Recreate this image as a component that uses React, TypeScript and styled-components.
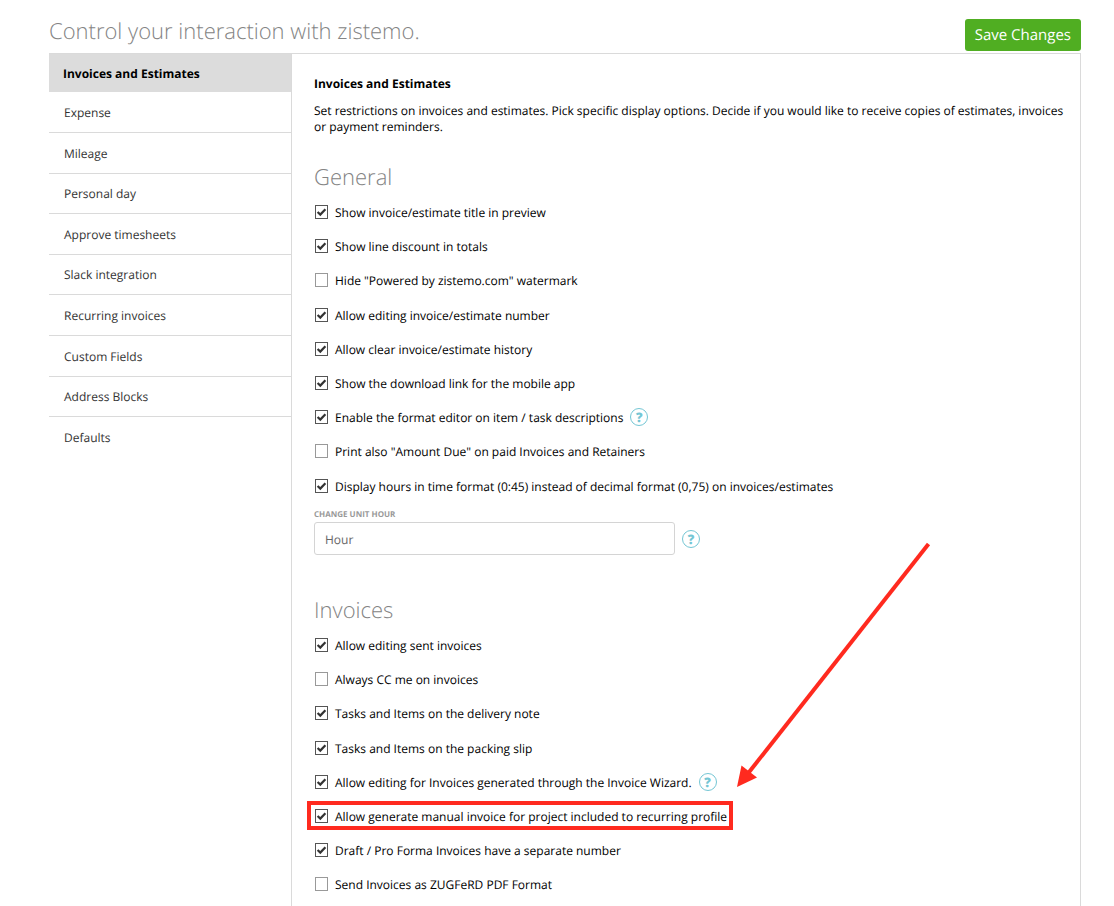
import React, { useState } from "react";
import styled, { createGlobalStyle } from "styled-components";

const GlobalStyle = createGlobalStyle`
  * { box-sizing: border-box; }
  body {
    margin: 0;
    background: #fff;
    color: #000;
    font: 12px/16px "Open Sans", "Noto Sans", sans-serif;
    text-rendering: geometricPrecision;
  }
  button, input { text-rendering: inherit; }
`;

const Page = styled.div`
  display: flex;
  flex-direction: column;
  min-height: 100vh;
  padding: 0 33px 0 49px;
`;

const Header = styled.header`
  display: flex;
  justify-content: space-between;
  align-items: flex-start;
  padding: 19px 0 2px;
`;

const Title = styled.h1`
  margin: 0;
  font-size: 22px;
  line-height: 24px;
  font-weight: 300;
  color: #848484;
`;

const SaveButton = styled.button`
  height: 32px;
  padding: 0 10px;
  border: 0;
  border-radius: 3px;
  background: #50ae22;
  color: #fff;
  font: 400 15px/32px "Open Sans", sans-serif;
  cursor: pointer;
`;

const Panel = styled.div`
  flex: 1;
  display: grid;
  grid-template-columns: 243px minmax(0, 1fr);
  border-top: 1px solid #dadada;
  border-right: 1px solid #dadada;
`;

const Sidebar = styled.nav`
  border-right: 1px solid #dadada;
`;

const MenuList = styled.ul`
  margin: 0;
  padding: 0;
  list-style: none;
`;

const MenuItem = styled.li`
  height: 41px;
  border-bottom: 1px solid #dadada;
  &:nth-child(4), &:nth-child(6), &:nth-child(9) { height: 40px; }
  &:first-child { height: 38px; border-bottom: 0; }
  &:last-child { border-bottom: 0; }
`;

const MenuLink = styled.a<{ $active: boolean }>`
  display: flex;
  align-items: center;
  height: 100%;
  padding: 1px 14px 0 ${(p) => (p.$active ? "14px" : "15px")};
  text-decoration: none;
  color: ${(p) => (p.$active ? "#000" : "#333")};
  background: ${(p) => (p.$active ? "#dcdcdc" : "transparent")};
  font-weight: ${(p) => (p.$active ? 700 : 400)};
`;

const Content = styled.main`
  padding: 22px 14px 0 22px;
`;

const PageHeading = styled.h2`
  margin: 0 0 11px;
  font-size: 12px;
  line-height: 16px;
  font-weight: 700;
`;

const Intro = styled.p`
  margin: 0;
`;

const Section = styled.section`
  padding-top: 30px;
  & + & { padding-top: 43px; }
`;

const SectionHeading = styled.h3`
  margin: 0 0 7px;
  font-size: 22px;
  line-height: 24px;
  font-weight: 300;
  color: #848484;
`;

const OptionList = styled.ul`
  margin: 0;
  padding: 0;
  list-style: none;
`;

const OptionRow = styled.li`
  position: relative;
  display: flex;
  align-items: center;
  gap: 7px;
  height: 34px;
  &:nth-child(5n + 4) { height: 35px; }
  & > button { margin-bottom: 2px; }
`;

const OptionLabel = styled.label`
  display: flex;
  align-items: center;
  gap: 6px;
  padding-left: 1px;
`;

const BoxStack = styled.span`
  display: inline-grid;
  width: 14px;
  height: 14px;
  margin-bottom: 2px;
  & > * { grid-area: 1 / 1; }
`;

const BoxInput = styled.input`
  appearance: none;
  width: 13px;
  height: 14px;
  margin: 0;
  border: 1px solid #999;
  background: #fff;
  &:checked { border-color: #555; }
  & + svg { visibility: hidden; }
  &:checked + svg { visibility: visible; }
`;

const BoxTick = styled.svg`
  width: 13px;
  height: 14px;
  pointer-events: none;
`;

const HelpButton = styled.button`
  width: 18px;
  height: 18px;
  padding: 0;
  border: 1px solid #74c6d4;
  border-radius: 50%;
  background: #fff;
  color: #74c6d4;
  font: 800 13px/16px "Open Sans", sans-serif;
  text-align: center;
  cursor: help;
`;

const Field = styled.div`
  display: flex;
  flex-direction: column;
  padding-top: 5px;
`;

const FieldLabel = styled.label`
  font-size: 8px;
  line-height: 12px;
  font-weight: 700;
  text-transform: uppercase;
  color: #999;
  margin-bottom: 1px;
`;

const FieldRow = styled.div`
  display: flex;
  align-items: center;
  gap: 7px;
`;

const TextInput = styled.input`
  width: 361px;
  height: 33px;
  padding: 2px 10px 0;
  border: 1px solid #d4d4d4;
  border-radius: 3px;
  background: #fff;
  color: #666;
  font: 12px/16px "Open Sans", sans-serif;
`;

const Highlight = styled.span`
  position: absolute;
  left: -7px;
  top: 1px;
  width: 426px;
  height: 29px;
  border: 4px solid #ff2a1f;
  pointer-events: none;
`;

const Arrow = styled.svg`
  position: absolute;
  left: 420px;
  bottom: 44px;
  width: 200px;
  height: 250px;
  pointer-events: none;
`;

type Option = { label: string; checked: boolean; help?: boolean; highlight?: boolean };

const menu = [
  "Invoices and Estimates",
  "Expense",
  "Mileage",
  "Personal day",
  "Approve timesheets",
  "Slack integration",
  "Recurring invoices",
  "Custom Fields",
  "Address Blocks",
  "Defaults",
];

const generalOptions: Option[] = [
  { label: "Show invoice/estimate title in preview", checked: true },
  { label: "Show line discount in totals", checked: true },
  { label: 'Hide "Powered by zistemo.com" watermark', checked: false },
  { label: "Allow editing invoice/estimate number", checked: true },
  { label: "Allow clear invoice/estimate history", checked: true },
  { label: "Show the download link for the mobile app", checked: true },
  { label: "Enable the format editor on item / task descriptions", checked: true, help: true },
  { label: 'Print also "Amount Due" on paid Invoices and Retainers', checked: false },
  {
    label: "Display hours in time format (0:45) instead of decimal format (0,75) on invoices/estimates",
    checked: true,
  },
];

const invoiceOptions: Option[] = [
  { label: "Allow editing sent invoices", checked: true },
  { label: "Always CC me on invoices", checked: false },
  { label: "Tasks and Items on the delivery note", checked: true },
  { label: "Tasks and Items on the packing slip", checked: true },
  { label: "Allow editing for Invoices generated through the Invoice Wizard.", checked: true, help: true },
  {
    label: "Allow generate manual invoice for project included to recurring profile",
    checked: true,
    highlight: true,
  },
  { label: "Draft / Pro Forma Invoices have a separate number", checked: true },
  { label: "Send Invoices as ZUGFeRD PDF Format", checked: false },
];

function Help() {
  return (
    <HelpButton type="button" title="Help">
      ?
    </HelpButton>
  );
}

function OptionItem({ option }: { option: Option }) {
  const [checked, setChecked] = useState(option.checked);
  return (
    <OptionRow>
      <OptionLabel>
        <BoxStack>
          <BoxInput type="checkbox" checked={checked} onChange={(e) => setChecked(e.target.checked)} />
          <BoxTick viewBox="0 0 13 14" aria-hidden="true">
            <path d="M2.6 7 L5.3 9.6 L10.4 4.2" fill="none" stroke="#333" strokeWidth="2.2" />
          </BoxTick>
        </BoxStack>
        {option.label}
      </OptionLabel>
      {option.help && <Help />}
      {option.highlight && (
        <>
          <Highlight />
          <Arrow viewBox="0 0 200 250" aria-hidden="true">
            <path d="M194.500 4 L12 236" stroke="#ff2a1f" strokeWidth="4" fill="none" />
            <path d="M3 247 L7.500 225.500 L23 237.500 Z" fill="#ff2a1f" />
          </Arrow>
        </>
      )}
    </OptionRow>
  );
}

export default function App() {
  const [active, setActive] = useState(menu[0]);
  return (
    <>
      <GlobalStyle />
      <Page>
        <Header>
          <Title>Control your interaction with zistemo.</Title>
          <SaveButton type="button">Save Changes</SaveButton>
        </Header>
        <Panel>
          <Sidebar>
            <MenuList>
              {menu.map((name) => (
                <MenuItem key={name}>
                  <MenuLink href="#" $active={name === active} onClick={() => setActive(name)}>
                    {name}
                  </MenuLink>
                </MenuItem>
              ))}
            </MenuList>
          </Sidebar>
          <Content>
            <PageHeading>Invoices and Estimates</PageHeading>
            <Intro>
              Set restrictions on invoices and estimates. Pick specific display options. Decide if you would like to
              receive copies of estimates, invoices or payment reminders.
            </Intro>
            <Section>
              <SectionHeading>General</SectionHeading>
              <OptionList>
                {generalOptions.map((o) => (
                  <OptionItem key={o.label} option={o} />
                ))}
              </OptionList>
              <Field>
                <FieldLabel htmlFor="unit-hour">Change unit hour</FieldLabel>
                <FieldRow>
                  <TextInput id="unit-hour" type="text" defaultValue="Hour" />
                  <Help />
                </FieldRow>
              </Field>
            </Section>
            <Section>
              <SectionHeading>Invoices</SectionHeading>
              <OptionList>
                {invoiceOptions.map((o) => (
                  <OptionItem key={o.label} option={o} />
                ))}
              </OptionList>
            </Section>
          </Content>
        </Panel>
      </Page>
    </>
  );
}
